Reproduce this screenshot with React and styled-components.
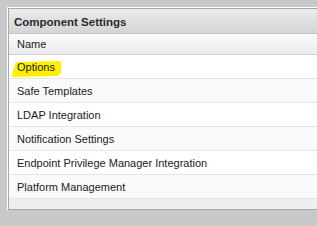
import React from 'react'
import styled, { createGlobalStyle } from 'styled-components'

const GlobalStyle = createGlobalStyle`
  html, body {
    margin: 0;
    padding: 0;
    background: #c8c8c8;
    overflow: hidden;
  }
  body {
    font-family: 'Liberation Sans', Arial, sans-serif;
  }
`

const Page = styled.div`
  padding: 7px 0 0 7px;
  width: 317px;
  height: 226px;
  box-sizing: border-box;
  overflow: hidden;
`

const Frame = styled.div`
  border-top: 1px solid #ffffff;
  border-left: 1px solid #ffffff;
`

const Panel = styled.div`
  border: 1px solid #a8a8a8;
  border-right: none;
  background: #ffffff;
`

const Title = styled.div`
  height: 25px;
  padding: 2px 0 0 5px;
  box-sizing: border-box;
  background: linear-gradient(#ebebeb, #d4d4d4);
  border-bottom: 1px solid #c4c4c4;
  font-size: 11.5px;
  font-weight: bold;
  line-height: 23px;
  color: #2a2a2e;
`

const HeaderRow = styled.div`
  height: 21px;
  padding: 1px 0 0 8px;
  box-sizing: border-box;
  background: linear-gradient(#fafafa, #ececf0);
  border-bottom: 1px solid #d2d2d2;
  font-size: 11px;
  line-height: 19px;
  color: #1c1c24;
`

const Row = styled.div`
  position: relative;
  height: 24px;
  padding: 2px 0 0 8px;
  box-sizing: border-box;
  background: ${(p) => (p.$alt ? '#fafafa' : '#ffffff')};
  border-bottom: 1px solid #e6e6e6;
  font-size: 11px;
  line-height: 21px;
  color: #1a1a1a;
`

const Label = styled.span`
  position: relative;
`

const Marker = styled.svg`
  position: absolute;
  left: 3px;
  top: 6px;
  width: 50px;
  height: 18px;
`

const Footer = styled.div`
  height: 10px;
  background: #efefef;
`

const items = [
  'Options',
  'Safe Templates',
  'LDAP Integration',
  'Notification Settings',
  'Endpoint Privilege Manager Integration',
  'Platform Management',
]

const App = () => {
  return (
    <>
      <GlobalStyle />
      <Page>
        <Frame>
          <Panel>
            <Title>Component Settings</Title>
            <HeaderRow>Name</HeaderRow>
            {items.map((name, i) => (
              <Row key={name} $alt={i % 2 === 1}>
                {i === 0 && (
                  <Marker viewBox='0 0 50 18'>
                    <path d='M4 1 L49 0 L49 12 L46 15 L0 16 L1 10 Z' fill='#ffee00' />
                  </Marker>
                )}
                <Label>{name}</Label>
              </Row>
            ))}
            <Footer />
          </Panel>
        </Frame>
      </Page>
    </>
  )
}

export default App
